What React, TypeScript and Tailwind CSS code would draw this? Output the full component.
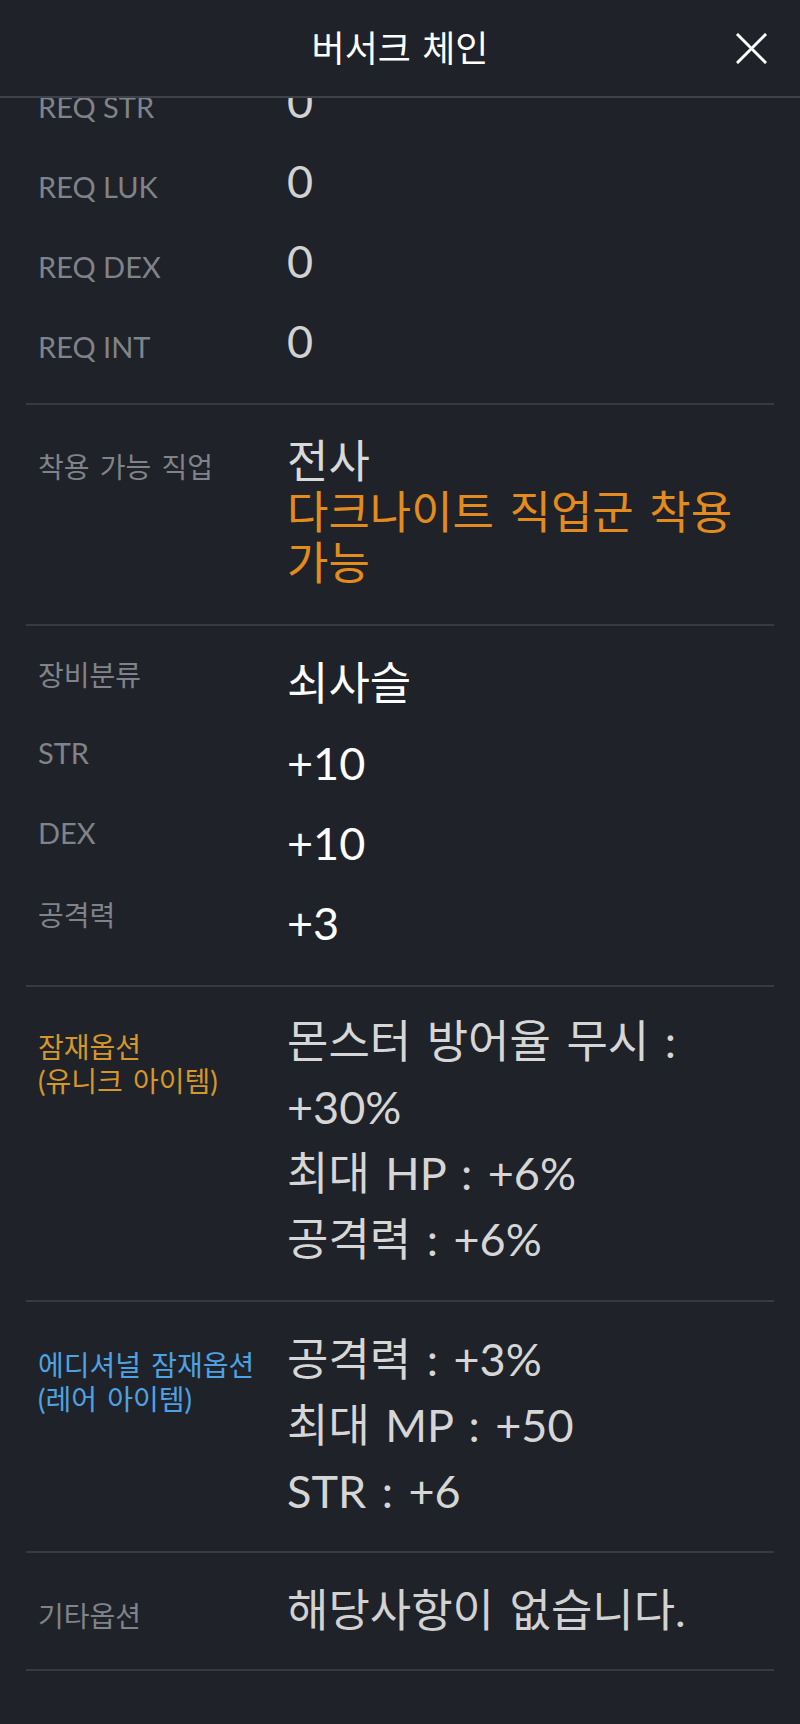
import React from "react";

const FONT = "[font-family:Lato,'Noto_Sans_CJK_KR',sans-serif]";

const Label: React.FC<{ children: React.ReactNode; latin?: boolean; color?: string; className?: string }> = ({
  children,
  latin,
  color = "text-[#80838a]",
  className = "",
}) => (
  <div
    className={`w-[249px] shrink-0 ${color} ${
      latin ? "text-[29px] leading-[30px]" : "text-[28px] leading-[34px] [word-spacing:3px]"
    } ${className}`}
  >
    {children}
  </div>
);

const CloseIcon = () => (
  <svg width="31" height="31" viewBox="0 0 31 31" fill="none">
    <path d="M2 2L29 29M29 2L2 29" stroke="#ffffff" strokeWidth="3" strokeLinecap="square" />
  </svg>
);

const VALUE = "w-[460px] text-[45px] break-keep [word-spacing:4px]";

export default function App() {
  const reqRows = ["REQ STR", "REQ LUK", "REQ DEX", "REQ INT"];
  const statRows = [
    { label: "장비분류", value: "쇠사슬", latin: false },
    { label: "STR", value: "+10", latin: true },
    { label: "DEX", value: "+10", latin: true },
    { label: "공격력", value: "+3", latin: false },
  ];

  return (
    <div className={`w-[800px] h-[1724px] bg-[#1f2229] flex flex-col overflow-hidden ${FONT}`}>
      {/* Header */}
      <div className="h-[98px] shrink-0 border-b-2 border-[#3e4149] grid grid-cols-[1fr_auto_1fr] items-center">
        <div />
        <div className="text-[36px] text-white leading-none [word-spacing:2px]">버서크 체인</div>
        <div className="justify-self-end mr-[33px] flex">
          <CloseIcon />
        </div>
      </div>

      {/* Scrolled content */}
      <div className="flex-1 overflow-hidden">
        <div className="mx-[26px]">
          {/* Required stats */}
          <div className="mt-[-29px] pb-[14px] border-b-2 border-[#373a41]">
            {reqRows.map((r) => (
              <div key={r} className="flex items-baseline h-[80px] pt-[8px] pl-[12px]">
                <Label latin>{r}</Label>
                <div className="text-[45px] leading-[48px] text-[#d2d2d2]">0</div>
              </div>
            ))}
          </div>

          {/* Job */}
          <div className="pt-[31px] pb-[35px] border-b-2 border-[#373a41]">
            <div className="flex items-baseline pl-[12px]">
              <Label>착용 가능 직업</Label>
              <div className={`${VALUE} leading-[51px]`}>
                <div className="text-[#d9d9d9]">전사</div>
                <div className="text-[#e38b1d]">다크나이트 직업군 착용 가능</div>
              </div>
            </div>
          </div>

          {/* Stats */}
          <div className="pt-[32px] pb-[36px] border-b-2 border-[#373a41] flex flex-col gap-[29px]">
            {statRows.map((s) => (
              <div key={s.label} className="flex items-start pl-[12px]">
                <Label latin={s.latin} className="mt-[0px]">
                  {s.label}
                </Label>
                <div className="text-[45px] leading-[51px] text-white">{s.value}</div>
              </div>
            ))}
          </div>

          {/* Potential */}
          <div className="pt-[21px] pb-[28px] border-b-2 border-[#373a41]">
            <div className="flex items-baseline pl-[12px]">
              <Label color="text-[#d6962a]">
                <div>잠재옵션</div>
                <div>(유니크 아이템)</div>
              </Label>
              <div className={`${VALUE} leading-[66px] text-[#d6d6d6]`}>
                <div>몬스터 방어율 무시 : +30%</div>
                <div>최대 HP : +6%</div>
                <div>공격력 : +6%</div>
              </div>
            </div>
          </div>

          {/* Additional potential */}
          <div className="pt-[24px] pb-[27px] border-b-2 border-[#373a41]">
            <div className="flex items-baseline pl-[12px]">
              <Label color="text-[#4ea2e3]">
                <div>에디셔널 잠재옵션</div>
                <div>(레어 아이템)</div>
              </Label>
              <div className={`${VALUE} leading-[66px] text-[#d6d6d6]`}>
                <div>공격력 : +3%</div>
                <div>최대 MP : +50</div>
                <div>STR : +6</div>
              </div>
            </div>
          </div>

          {/* Etc */}
          <div className="pt-[24px] pb-[26px] border-b-2 border-[#373a41]">
            <div className="flex items-baseline pl-[12px]">
              <Label>기타옵션</Label>
              <div className={`${VALUE} leading-[66px] text-[#d2d2d2]`}>해당사항이 없습니다.</div>
            </div>
          </div>
        </div>
      </div>
    </div>
  );
}
